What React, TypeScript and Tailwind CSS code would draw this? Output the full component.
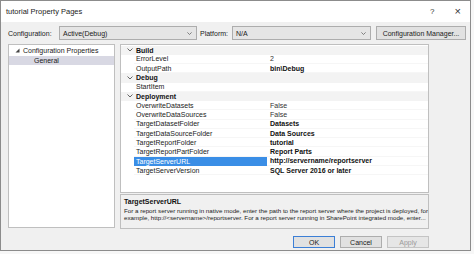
import React from 'react';

type Row =
  | { kind: 'cat'; label: string }
  | { kind: 'prop'; name: string; value?: string; bold?: boolean; selected?: boolean };

const rows: Row[] = [
  { kind: 'cat', label: 'Build' },
  { kind: 'prop', name: 'ErrorLevel', value: '2' },
  { kind: 'prop', name: 'OutputPath', value: 'bin\\Debug', bold: true },
  { kind: 'cat', label: 'Debug' },
  { kind: 'prop', name: 'StartItem' },
  { kind: 'cat', label: 'Deployment' },
  { kind: 'prop', name: 'OverwriteDatasets', value: 'False' },
  { kind: 'prop', name: 'OverwriteDataSources', value: 'False' },
  { kind: 'prop', name: 'TargetDatasetFolder', value: 'Datasets', bold: true },
  { kind: 'prop', name: 'TargetDataSourceFolder', value: 'Data Sources', bold: true },
  { kind: 'prop', name: 'TargetReportFolder', value: 'tutorial', bold: true },
  { kind: 'prop', name: 'TargetReportPartFolder', value: 'Report Parts', bold: true },
  { kind: 'prop', name: 'TargetServerURL', value: 'http://servername/reportserver', bold: true, selected: true },
  { kind: 'prop', name: 'TargetServerVersion', value: 'SQL Server 2016 or later', bold: true },
];

const Chevron = () => (
  <svg width="6" height="4" viewBox="0 0 6 4" className="text-[#555]">
    <path d="M0.5 0.5 L3 3 L5.5 0.5" fill="none" stroke="currentColor" strokeWidth="0.9" />
  </svg>
);

const Dropdown = ({ value, className }: { value: string; className: string }) => (
  <div className={`h-[14px] flex items-center justify-between pl-[3px] pr-[4px] bg-[#e5e5e5] border border-[#adadad] ${className}`}>
    <span>{value}</span>
    <svg width="5" height="3" viewBox="0 0 5 3" className="text-[#666]">
      <path d="M0.4 0.4 L2.5 2.5 L4.6 0.4" fill="none" stroke="currentColor" strokeWidth="0.8" />
    </svg>
  </div>
);

const Button = ({ label, className = '' }: { label: string; className?: string }) => (
  <div className={`h-[12px] w-[42px] flex items-center justify-center border bg-[#e1e1e1] ${className}`}>{label}</div>
);

export default function App() {
  return (
    <div className="w-[474px] h-[254px] bg-[#f7f7f7] text-[7px] leading-none text-[#1a1a1a]" style={{ fontFamily: '"Liberation Sans", Arial, sans-serif' }}>
      <div className="w-[471px] h-[251px] border border-[#8c8c8c] bg-[#f0f0f0] flex flex-col">
        {/* title bar */}
        <div className="h-[21px] bg-white flex items-center pl-[5px] pr-[9px] shrink-0">
          <span className="text-[7.5px]">tutorial Property Pages</span>
          <span className="ml-auto text-[8px] text-[#333]">?</span>
          <span className="ml-[20px] text-[11px] font-light text-[#333]">×</span>
        </div>

        {/* configuration row */}
        <div className="flex items-center mt-[4px] pl-[7px] shrink-0">
          <span className="w-[51px]">Configuration:</span>
          <Dropdown value="Active(Debug)" className="w-[138px]" />
          <span className="ml-[3px] w-[32px]">Platform:</span>
          <Dropdown value="N/A" className="w-[139px]" />
          <div className="ml-[5px] h-[14px] w-[90px] flex items-center justify-center bg-[#e1e1e1] border border-[#adadad]">
            Configuration Manager...
          </div>
        </div>

        {/* main area */}
        <div className="flex mt-[4px] pl-[7px] gap-[5px] shrink-0">
          <div className="w-[107px] h-[184px] bg-white border border-[#bfbfbf] pt-[1px]">
            <div className="h-[9.5px] flex items-center pl-[6px]">
              <svg width="5" height="5" viewBox="0 0 5 5" className="mr-[3px]">
                <path d="M4.5 0.5 L4.5 4.5 L0.5 4.5 Z" fill="#444" />
              </svg>
              <span>Configuration Properties</span>
            </div>
            <div className="h-[9.5px] flex items-center pl-[25px] bg-[#d8d8e3]">General</div>
          </div>

          <div className="w-[309px] flex flex-col">
            <div className="h-[149px] bg-white border border-[#bfbfbf] pt-[0.5px]">
              {rows.map((r, i) =>
                r.kind === 'cat' ? (
                  <div key={i} className="h-[9.27px] flex items-center bg-[#f3f3f3]">
                    <div className="w-[15px] flex justify-center pl-[2px]">
                      <Chevron />
                    </div>
                    <span className="font-bold text-[#111]">{r.label}</span>
                  </div>
                ) : (
                  <div key={i} className="h-[9.27px] flex items-center">
                    <div className="w-[13px]" />
                    <div className={`w-[133px] h-full flex items-center pl-[2px] ${r.selected ? 'bg-[#3a8ee6] text-white' : 'text-[#222] border-b border-[#f6f6f6]'}`}>
                      {r.name}
                    </div>
                    <div className={`flex-1 h-full flex items-center pl-[3px] border-b border-[#f6f6f6] ${r.bold ? 'font-bold text-[#111]' : 'text-[#333]'}`}>
                      {r.value}
                    </div>
                  </div>
                ),
              )}
            </div>
            <div className="mt-[1px] h-[35px] border border-[#bfbfbf] bg-[#f0f0f0] px-[3px] pt-[3px] text-[6.2px] text-[#222] overflow-hidden">
              <div className="font-bold text-[7px] text-[#111]">TargetServerURL</div>
              <div className="mt-[2px] leading-[7px] whitespace-nowrap">
                For a report server running in native mode, enter the path to the report server where the project is deployed, for
              </div>
              <div className="leading-[7px] whitespace-nowrap">
                example, http://&lt;servername&gt;/reportserver. For a report server running in SharePoint integrated mode, enter...
              </div>
            </div>
          </div>
        </div>

        {/* buttons */}
        <div className="flex justify-end gap-[5px] pr-[41px] mt-[7px] shrink-0">
          <Button label="OK" className="border-[#3c7fd6] border-[1.5px]" />
          <Button label="Cancel" className="border-[#adadad]" />
          <Button label="Apply" className="border-[#c4c4c4] bg-[#e6e6e6] text-[#9a9a9a]" />
        </div>
      </div>
    </div>
  );
}
